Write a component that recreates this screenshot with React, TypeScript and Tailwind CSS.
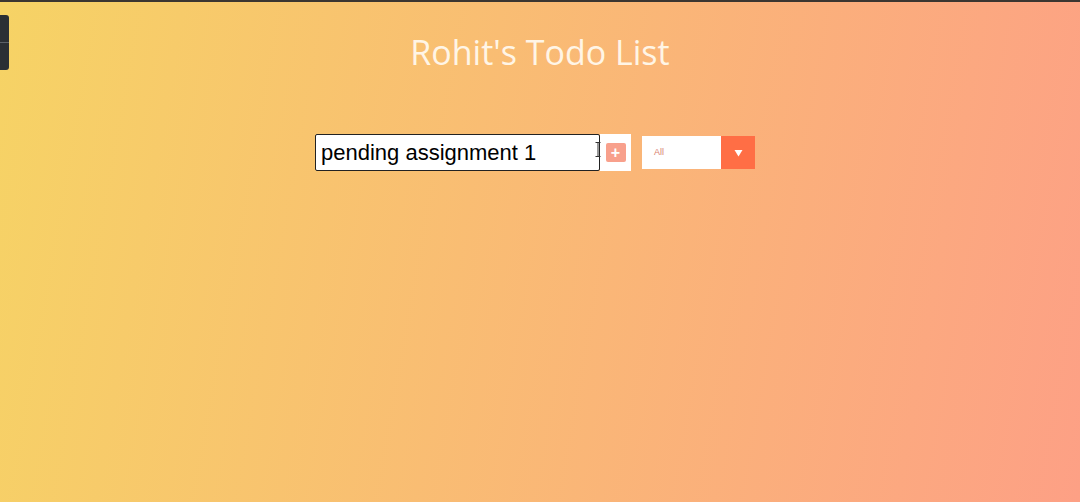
import React from "react";

export default function App() {
  return (
    <div className="relative min-h-[502px] w-full overflow-hidden border-t-2 border-[#3b3631] bg-[linear-gradient(100deg,#f6d365_0%,#fda085_100%)]">
      {/* side tab */}
      <div className="absolute left-0 top-[13px] flex h-[55px] w-[9px] flex-col overflow-hidden rounded-r-[3px] bg-[#2a2f34]">
        <div className="flex-1" />
        <div className="h-px bg-[#5b6168]" />
        <div className="flex-1" />
      </div>

      <header className="pt-[30px] text-center">
        <h1 className="text-[34px] leading-[40px] text-[#fff5e6] [font-family:'Open_Sans',Lato,sans-serif]">
          Rohit's Todo List
        </h1>
      </header>

      <form className="mt-[62px] flex items-center justify-center pr-[10px]" onSubmit={(e) => e.preventDefault()}>
        <div className="relative flex">
          <input
            defaultValue="pending assignment 1"
            className="h-[37px] w-[285px] rounded-[2px] border border-[#222] bg-white px-[5px] text-[22px] text-black outline-none [font-family:'Liberation_Sans',Arial,sans-serif]"
          />
          <svg className="pointer-events-none absolute left-[280px] top-[8px]" width="6" height="15" viewBox="0 0 6 15">
            <path d="M0.5 0.5h5M3 0.5v14M0.5 14.5h5" stroke="#333" strokeWidth="1" fill="none" />
          </svg>
          <button type="submit" className="flex h-[37px] w-[31px] items-center justify-center bg-white">
            <span className="flex h-[19px] w-[20px] items-center justify-center rounded-[2px] bg-[#f8a08c] text-[16px] font-bold leading-none text-white [font-family:'Liberation_Sans',Arial,sans-serif]">
              +
            </span>
          </button>
        </div>

        <div className="ml-[11px] flex h-[33px] w-[113px] bg-white">
          <div className="flex flex-1 items-center pl-[12px] text-[9px] text-[#d98070] [font-family:'Liberation_Sans',Arial,sans-serif]">
            All
          </div>
          <div className="flex w-[34px] items-center justify-center bg-[#ff6e45]">
            <svg width="9" height="8" viewBox="0 0 9 8">
              <path d="M0.5 1h8L4.5 7.5z" fill="#fff" />
            </svg>
          </div>
        </div>
      </form>
    </div>
  );
}
